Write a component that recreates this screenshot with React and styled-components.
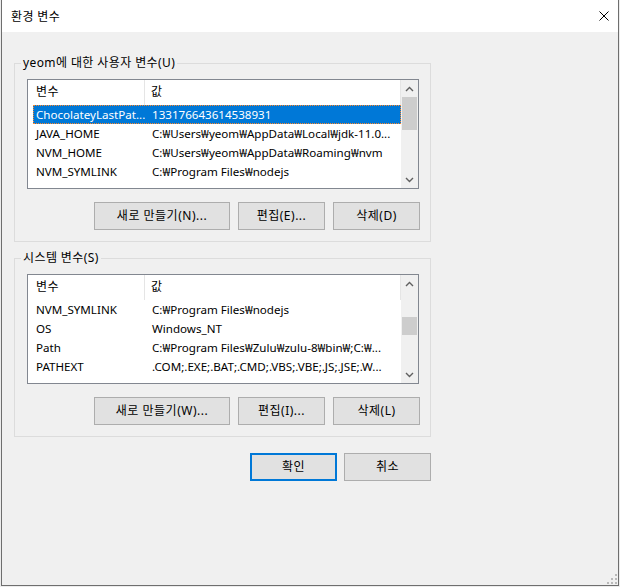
import React from 'react';
import styled, { createGlobalStyle } from 'styled-components';

const GlobalStyle = createGlobalStyle`
  html, body { margin: 0; padding: 0; background: #ececec; }
  body {
    font-family: "Noto Sans", "Noto Sans CJK KR", sans-serif;
    font-size: 12px;
    color: #000;
  }
  * { box-sizing: border-box; }
`;

const Window = styled.div`
  margin-left: 1px;
  width: 618px;
  height: 586px;
  border: 1px solid #6e6e6e;
  border-top: none;
  background: #f0f0f0;
  display: flex;
  flex-direction: column;
`;

const TitleBar = styled.div`
  height: 32px;
  flex: none;
  background: #fff;
  display: flex;
  align-items: center;
  justify-content: space-between;
  padding: 0 9px 0 9px;
`;

const Title = styled.span`
  font-family: "Noto Sans CJK KR", sans-serif;
  font-size: 12px;
  line-height: 16px;
  letter-spacing: 0.5px;
`;

const CloseIcon = () => (
  <svg width="10" height="10" viewBox="0 0 10 10">
    <path d="M0.5 0.5 L9.5 9.5 M9.5 0.5 L0.5 9.5" stroke="#000" strokeWidth="1" fill="none" />
  </svg>
);

const Content = styled.div`
  flex: 1;
  display: flex;
  flex-direction: column;
  align-items: flex-start;
  padding: 23px 0 0 12px;
`;

const Group = styled.fieldset`
  margin: ${(p) => (p.$first ? '0' : '8px 0 0 0')};
  width: 417px;
  min-width: 0;
  border: 1px solid #dcdcdc;
  padding: 8px 10px 11px 0;
`;

const Legend = styled.legend`
  margin-left: 6px;
  padding: 0 2px;
  height: 16px;
  line-height: 16px;
  letter-spacing: 0.4px;
  font-family: "Noto Sans", "Noto Sans CJK KR", sans-serif;
`;

const ListBox = styled.div`
  margin-left: 12px;
  width: 392px;
  height: 110px;
  border: 1px solid #828790;
  background: #fff;
  display: flex;
`;

const ListMain = styled.div`
  flex: 1;
  min-width: 0;
  display: flex;
  flex-direction: column;
  overflow: hidden;
`;

const Header = styled.div`
  display: flex;
  height: 25px;
  flex: none;
`;

const HeaderCell = styled.div`
  width: ${(p) => (p.$w ? `${p.$w}px` : 'auto')};
  flex: ${(p) => (p.$w ? 'none' : '1')};
  padding: 3px 0 0 ${(p) => p.$pad}px;
  line-height: 16px;
  border-right: 1px solid #e5e5e5;
  letter-spacing: 0.5px;
  font-family: "Noto Sans CJK KR", sans-serif;
`;

const Row = styled.div`
  display: grid;
  grid-template-columns: 111px 1fr;
  align-items: center;
  height: 19px;
  margin-left: 5px;
  border: 1px ${(p) => (p.$selected ? 'dotted #ff8728' : 'solid transparent')};
  background: ${(p) => (p.$selected ? '#0078d7' : 'transparent')};
  color: ${(p) => (p.$selected ? '#fff' : '#000')};
`;

const Cell = styled.span`
  padding-left: ${(p) => p.$pad}px;
  font-size: 11.6px;
  line-height: 16px;
  white-space: nowrap;
  overflow: hidden;
`;

const ScrollBar = styled.div`
  width: 17px;
  flex: none;
  background: #f0f0f0;
  display: flex;
  flex-direction: column;
`;

const ScrollArrow = styled.div`
  height: 17px;
  flex: none;
  display: flex;
  align-items: center;
  justify-content: center;
`;

const Track = styled.div`
  flex: 1;
  display: flex;
  flex-direction: column;
`;

const Thumb = styled.div`
  margin: ${(p) => p.$top}px 1px 0 1px;
  height: ${(p) => p.$h}px;
  background: #cdcdcd;
`;

const Chevron = ({ up }) => (
  <svg width="9" height="6" viewBox="0 0 9 6">
    <path
      d={up ? 'M1 5 L4.5 1.5 L8 5' : 'M1 1 L4.5 4.5 L8 1'}
      stroke="#606060"
      strokeWidth="1.4"
      fill="none"
    />
  </svg>
);

const ButtonRow = styled.div`
  display: flex;
  justify-content: flex-end;
  gap: ${(p) => p.$gap}px;
  margin-top: ${(p) => p.$top}px;
  width: ${(p) => (p.$w ? `${p.$w}px` : 'auto')};
`;

const Button = styled.button`
  width: ${(p) => p.$w}px;
  height: 28px;
  margin: 0;
  padding: 0;
  background: #e1e1e1;
  border: ${(p) => (p.$default ? '2px solid #0078d7' : '1px solid #adadad')};
  font-family: "Noto Sans", "Noto Sans CJK KR", sans-serif;
  font-size: 12px;
  line-height: 16px;
  letter-spacing: 0.5px;
  color: #000;
`;

const Grip = styled.div`
  margin-top: auto;
  align-self: flex-end;
  margin-right: 1px;
  margin-bottom: 1px;
  width: 10px;
  height: 10px;
  display: flex;
`;

const GripIcon = () => (
  <svg width="10" height="10" viewBox="0 0 10 10">
    {[
      [8, 0],
      [8, 4],
      [4, 4],
      [8, 8],
      [4, 8],
      [0, 8],
    ].map(([x, y], i) => (
      <rect key={i} x={x} y={y} width="2" height="2" fill="#b9b9b9" />
    ))}
  </svg>
);

const VarList = ({ rows, selected, thumbTop, thumbH }) => (
  <ListBox>
    <ListMain>
      <Header>
        <HeaderCell $w={117} $pad={8}>변수</HeaderCell>
        <HeaderCell $pad={6}>값</HeaderCell>
      </Header>
      {rows.map(([k, v], i) => (
        <Row key={i} $selected={selected === i}>
          <Cell $pad={2}>{k}</Cell>
          <Cell $pad={7}>{v}</Cell>
        </Row>
      ))}
    </ListMain>
    <ScrollBar>
      <ScrollArrow>
        <Chevron up />
      </ScrollArrow>
      <Track>
        <Thumb $top={thumbTop} $h={thumbH} />
      </Track>
      <ScrollArrow>
        <Chevron />
      </ScrollArrow>
    </ScrollBar>
  </ListBox>
);

const userRows = [
  ['ChocolateyLastPat...', '133176643614538931'],
  ['JAVA_HOME', 'C:₩Users₩yeom₩AppData₩Local₩jdk-11.0...'],
  ['NVM_HOME', 'C:₩Users₩yeom₩AppData₩Roaming₩nvm'],
  ['NVM_SYMLINK', 'C:₩Program Files₩nodejs'],
];

const sysRows = [
  ['NVM_SYMLINK', 'C:₩Program Files₩nodejs'],
  ['OS', 'Windows_NT'],
  ['Path', 'C:₩Program Files₩Zulu₩zulu-8₩bin₩;C:₩...'],
  ['PATHEXT', '.COM;.EXE;.BAT;.CMD;.VBS;.VBE;.JS;.JSE;.W...'],
];

export default function App() {
  return (
    <>
      <GlobalStyle />
      <Window>
        <TitleBar>
          <Title>환경 변수</Title>
          <CloseIcon />
        </TitleBar>
        <Content>
          <Group $first>
            <Legend>yeom에 대한 사용자 변수(U)</Legend>
            <VarList rows={userRows} selected={0} thumbTop={0} thumbH={33} />
            <ButtonRow $gap={8} $top={13}>
              <Button $w={136}>새로 만들기(N)...</Button>
              <Button $w={87}>편집(E)...</Button>
              <Button $w={87}>삭제(D)</Button>
            </ButtonRow>
          </Group>
          <Group>
            <Legend>시스템 변수(S)</Legend>
            <VarList rows={sysRows} selected={-1} thumbTop={25} thumbH={18} />
            <ButtonRow $gap={8} $top={13}>
              <Button $w={136}>새로 만들기(W)...</Button>
              <Button $w={87}>편집(I)...</Button>
              <Button $w={87}>삭제(L)</Button>
            </ButtonRow>
          </Group>
          <ButtonRow $gap={7} $top={16} $w={417}>
            <Button $w={87} $default>확인</Button>
            <Button $w={87}>취소</Button>
          </ButtonRow>
          <Grip>
            <GripIcon />
          </Grip>
        </Content>
      </Window>
    </>
  );
}
